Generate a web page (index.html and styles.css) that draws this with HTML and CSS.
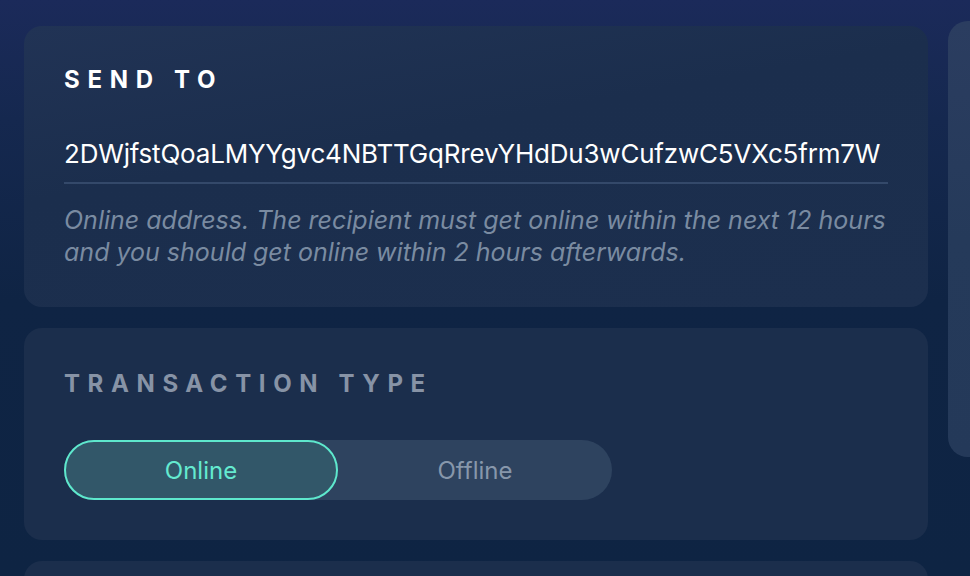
FILE: index.html
```html
<!DOCTYPE html>
<html>
<head>
<meta charset="utf-8">
<link rel="stylesheet" href="styles.css">
</head>
<body>
<div class="page">
  <div class="main">
    <section class="card card-send">
      <h2 class="title">SEND TO</h2>
      <div class="address">2DWjfstQoaLMYYgvc4NBTTGqRrevYHdDu3wCufzwC5VXc5frm7W</div>
      <p class="hint">Online address. The recipient must get online within the next 12 hours and you should get online within 2 hours afterwards.</p>
    </section>
    <section class="card card-type">
      <h2 class="title muted">TRANSACTION TYPE</h2>
      <div class="toggle">
        <div class="opt active">Online</div>
        <div class="opt">Offline</div>
      </div>
    </section>
    <section class="card card-next"></section>
  </div>
  <aside class="side"></aside>
</div>
</body>
</html>
```
FILE: styles.css
```css
html, body {
  margin: 0;
  height: 100%;
}
body {
  background: linear-gradient(180deg, #1b2a5a 0px, #15284f 120px, #0f2444 300px, #0e2443 576px);
  font-family: "Inter", "Roboto", sans-serif;
  overflow: hidden;
}
.page {
  display: flex;
  gap: 20px;
  padding: 26px 0 0 24px;
  height: 550px;
  overflow: hidden;
}
.main {
  width: 904px;
  flex: none;
  display: flex;
  flex-direction: column;
  gap: 21px;
}
.card {
  background: linear-gradient(170deg, #213355 0%, #1b2e4d 40%, #1c2f4e 100%);
  border-radius: 18px;
  padding: 0 40px;
  box-sizing: border-box;
  flex: none;
}
.card-send {
  height: 281px;
  padding-top: 40px;
}
.card-type {
  height: 212px;
  padding-top: 42px;
  background: #1b2e4c;
}
.card-next {
  height: 60px;
  background: #1b2e4c;
}
.title {
  margin: 0;
  font-size: 24px;
  line-height: 28px;
  font-weight: 700;
  letter-spacing: 7.7px;
  color: #ffffff;
}
.title.muted {
  color: #8793a6;
  letter-spacing: 7.6px;
}
.address {
  margin-top: 45px;
  font-size: 26px;
  line-height: 30px;
  color: #ffffff;
  padding-bottom: 13px;
  border-bottom: 2px solid #34496a;
  width: 824px;
  white-space: nowrap;
  letter-spacing: -0.2px;
}
.hint {
  margin: 20px 0 0;
  font-size: 25px;
  line-height: 32px;
  font-style: italic;
  color: #7a8ba1;
  width: 845px;
}
.toggle {
  margin-top: 42px;
  width: 548px;
  height: 60px;
  border-radius: 30px;
  background: #2e435f;
  display: flex;
}
.opt {
  flex: 1;
  display: flex;
  align-items: center;
  justify-content: center;
  font-size: 24px;
  color: #8797ab;
  border-radius: 30px;
  box-sizing: border-box;
}
.opt.active {
  flex: none;
  width: 274px;
  background: #325769;
  border: 2px solid #5ee8cd;
  color: #64ead0;
}
.side {
  width: 60px;
  height: 436px;
  margin-top: -5px;
  border-radius: 20px 0 0 20px;
  background: linear-gradient(180deg, #2b3d60 0%, #253a5a 50%, #243959 100%);
}
```
